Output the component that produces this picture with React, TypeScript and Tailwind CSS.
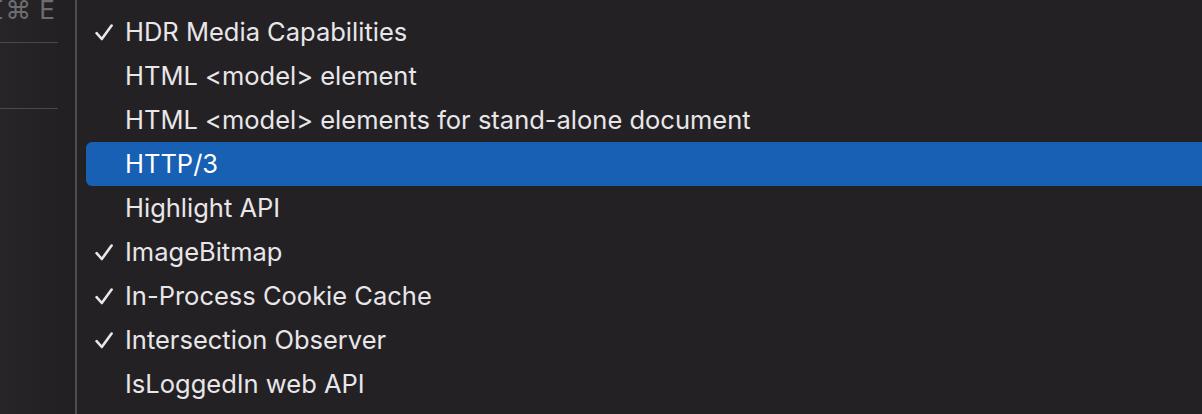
import React from "react";

const items: { label: string; checked: boolean; active?: boolean }[] = [
  { label: "HDR Media Capabilities", checked: true },
  { label: "HTML <model> element", checked: false },
  { label: "HTML <model> elements for stand-alone document", checked: false },
  { label: "HTTP/3", checked: false, active: true },
  { label: "Highlight API", checked: false },
  { label: "ImageBitmap", checked: true },
  { label: "In-Process Cookie Cache", checked: true },
  { label: "Intersection Observer", checked: true },
  { label: "IsLoggedIn web API", checked: false },
];

function Check() {
  return (
    <svg width="18" height="17" viewBox="0 0 18 17" fill="none">
      <path d="M1.6 9.2 L6.8 15 L16.6 1.6" stroke="currentColor" strokeWidth="2.6" strokeLinecap="round" strokeLinejoin="round" />
    </svg>
  );
}

export default function App() {
  return (
    <div
      className="flex h-[414px] w-[1202px] overflow-hidden bg-[#232124]"
      style={{ fontFamily: "Inter, 'Noto Sans', sans-serif" }}
    >
      <aside className="flex w-[77px] shrink-0 flex-col border-r-2 border-[#4e4c4f] bg-gradient-to-r from-[#282528] to-[#211f22]">
        <div className="-mt-[3px] flex h-[26px] items-center justify-end pr-[20px] text-[26px] leading-none text-[#6e6c6f]">
          <span className="-mr-[6px]">⌥</span>
          <span className="ml-[7px]">⌘</span>
          <span className="ml-[8px]">E</span>
        </div>
        <div className="mt-[19px] h-px w-[58px] bg-[#4a484b]" />
        <div className="mt-[65px] h-px w-[58px] bg-[#4a484b]" />
      </aside>
      <div className="flex flex-1 flex-col pl-[9px] pt-[10px]">
        {items.map((it) => (
          <div
            key={it.label}
            className={
              "flex h-[44px] shrink-0 items-center rounded-l-[6px] " +
              (it.active ? "bg-[#1760b4] text-white" : "text-[#e8e6e9]")
            }
          >
            <div className="flex w-[39px] shrink-0 items-center pl-[9px]">
              {it.checked ? <Check /> : null}
            </div>
            <span className="whitespace-nowrap text-[25.5px] leading-none">{it.label}</span>
          </div>
        ))}
      </div>
    </div>
  );
}
